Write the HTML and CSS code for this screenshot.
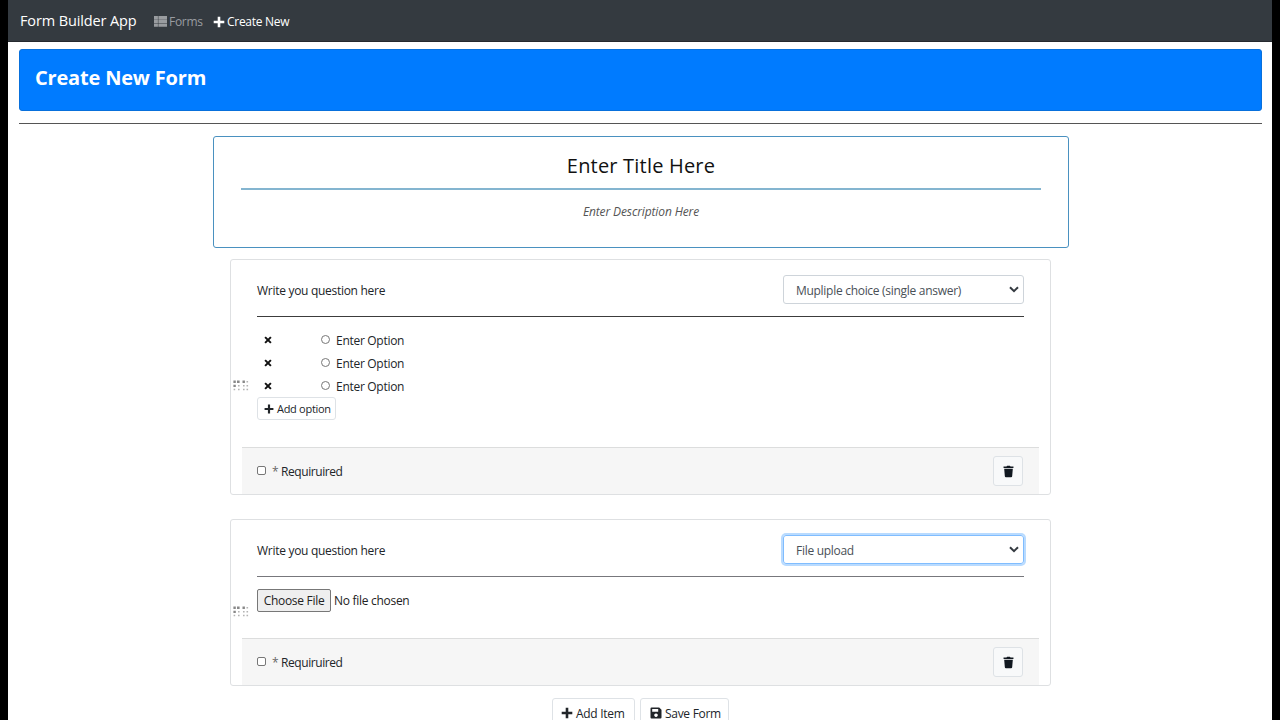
FILE: index.html
```html
<!DOCTYPE html>
<html lang="en">
<head>
<meta charset="utf-8">
<title>Form Builder App</title>
<link rel="stylesheet" href="styles.css">
</head>
<body>
<svg class="defs" width="0" height="0" aria-hidden="true">
  <symbol id="plus" viewBox="0 0 12 12"><path d="M4.7 .7h2.6v4h4v2.6h-4v4H4.7v-4h-4V4.7h4z"/></symbol>
  <symbol id="times" viewBox="0 0 8 8"><path d="M1.1 1.1l5.8 5.8M6.9 1.1L1.1 6.9" fill="none" stroke="currentColor" stroke-width="2"/></symbol>
  <symbol id="list" viewBox="0 0 13 11"><path d="M0 .1h3.9v3.3H0zM4.4.1H13v3.3H4.4zM0 3.8h3.9v3.3H0zM4.4 3.8H13v3.3H4.4zM0 7.5h3.9v3.3H0zM4.4 7.5H13v3.3H4.4z"/></symbol>
  <symbol id="trash" viewBox="0 0 12 14"><path d="M.6 1.6h3.2L4.5.6h3l.7 1h3.2v1.5H.6zM1.3 3.9h9.4L10 12.2c-.1.8-.5 1.2-1.2 1.2H3.2c-.7 0-1.1-.4-1.2-1.2z"/></symbol>
  <symbol id="save" viewBox="0 0 12 12"><path fill-rule="evenodd" d="M1.5.5h7.7l2.3 2.3v7.7q0 1-1 1h-9q-1 0-1-1v-9q0-1 1-1zM2.2 2v2.8h6V2zM6 6.4a1.8 1.8 0 1 0 .01 0z"/></symbol>
  <symbol id="chevron" viewBox="0 0 10 7"><path d="M1 1.2l4 4 4-4" fill="none" stroke="currentColor" stroke-width="2"/></symbol>
  <symbol id="grip" viewBox="0 0 16 11"><path fill="#888" d="M.4.5h2.4v2.4H.4zM4 .5h2.6v2.4H4zM9.5.5h2.4v2.4H9.5zM.4 4.7h2.4v2.3H.4z"/><path fill="#b4b4b4" d="M13.5 1h1.6v1.6h-1.6zM5 5h1.6v1.6H5zM10 5h1.6v1.6H10zM13.5 5h1.6v1.6h-1.6zM.6 8.7h1.6v1.5H.6zM5 8.7h1.6v1.5H5zM10 8.7h1.6v1.5H10zM13.5 8.7h1.6v1.5h-1.6z"/></symbol>
</svg>
<div class="page">
  <nav class="navbar">
    <span class="brand">Form Builder App</span>
    <a class="nav-link forms"><svg class="i-list"><use href="#list"/></svg><span>Forms</span></a>
    <a class="nav-link active"><svg class="i-plus"><use href="#plus"/></svg><span>Create New</span></a>
  </nav>
  <main class="content">
    <header class="banner"><h1>Create New Form</h1></header>
    <div class="rule"></div>
    <section class="title-card">
      <h2><span>Enter Title Here</span></h2>
      <p><span>Enter Description Here</span></p>
    </section>

    <section class="question first">
      <svg class="grip"><use href="#grip"/></svg>
      <div class="question-body">
        <div class="question-head">
          <span class="question-text">Write you question here</span>
          <div class="select"><span class="choice">Mupliple choice (single answer)</span><svg class="i-chevron"><use href="#chevron"/></svg></div>
        </div>
        <div class="options">
          <div class="option"><svg class="i-times"><use href="#times"/></svg><i class="radio"></i><span>Enter Option</span></div>
          <div class="option"><svg class="i-times"><use href="#times"/></svg><i class="radio"></i><span>Enter Option</span></div>
          <div class="option"><svg class="i-times"><use href="#times"/></svg><i class="radio"></i><span>Enter Option</span></div>
        </div>
        <button class="add-option"><svg class="i-plus-sm"><use href="#plus"/></svg><span>Add option</span></button>
      </div>
      <footer class="question-foot">
        <i class="checkbox"></i><span class="star">*</span><span class="required">Requiruired</span>
        <button class="delete"><svg class="i-trash"><use href="#trash"/></svg></button>
      </footer>
    </section>

    <section class="question second">
      <svg class="grip"><use href="#grip"/></svg>
      <div class="question-body">
        <div class="question-head">
          <span class="question-text">Write you question here</span>
          <div class="select focused"><span class="upload">File upload</span><svg class="i-chevron"><use href="#chevron"/></svg></div>
        </div>
        <div class="file"><button class="file-button"><span>Choose File</span></button><span class="file-name">No file chosen</span></div>
      </div>
      <footer class="question-foot">
        <i class="checkbox"></i><span class="star">*</span><span class="required">Requiruired</span>
        <button class="delete"><svg class="i-trash"><use href="#trash"/></svg></button>
      </footer>
    </section>

    <div class="actions">
      <button class="add-item"><svg class="i-plus"><use href="#plus"/></svg><span>Add Item</span></button>
      <button class="save-form"><svg class="i-save"><use href="#save"/></svg><span>Save Form</span></button>
    </div>
  </main>
</div>
</body>
</html>
```
FILE: styles.css
```css
* { box-sizing: border-box; }
html, body { height: 720px; overflow: hidden; }
body { margin: 0; background: #000; color: #212529; font: 12px/18px "Open Sans", "Noto Sans", sans-serif; letter-spacing: -.29px; }
span { white-space: nowrap; }
svg { flex: none; fill: currentColor; display: block; }
button { font: inherit; letter-spacing: inherit; color: inherit; margin: 0; padding: 0; display: flex; align-items: center; background: #fff; border: 1px solid #dee2e6; border-radius: 3px; }
.defs { position: absolute; }
.page { margin: 0 8px; height: 720px; background: #fff; overflow: hidden; }

.navbar { height: 42px; padding: 1px 12px 0; display: flex; align-items: center; background: #343a40; border-bottom: 1px solid #25292e; color: #fff; }
.brand { width: 134px; font-size: 14.5px; letter-spacing: -.13px; }
.nav-link { display: flex; align-items: center; padding-top: 1px; }
.forms { width: 59px; gap: 2px; color: #999ca0; }
.active { gap: 2px; }
.i-list { width: 13px; height: 11px; }
.i-plus { width: 12px; height: 12px; }

.content { padding: 7px 10px 0 11px; }
.banner { height: 62px; padding: 14px 15px; background: #007bff; border: 1px solid #0870dc; border-radius: 3px; color: #fff; }
.banner h1 { margin: 0; font-size: 20px; line-height: 28px; font-weight: 700; letter-spacing: -.18px; }
.rule { height: 1px; margin-top: 12px; background: #555; }

.title-card { width: 856px; height: 112px; margin: 12px 0 0 194px; padding: 0 27px; border: 1px solid #4a91c0; border-radius: 3px; text-align: center; }
.title-card h2 { height: 53px; margin: 0; padding-top: 15px; border-bottom: 2px solid #84b5d0; font-size: 20px; line-height: 28px; font-weight: 400; letter-spacing: .2px; color: #111; }
.title-card p { margin: 13px 0 0; font-style: italic; font-size: 12px; letter-spacing: -.12px; color: #555; }

.question { position: relative; width: 821px; margin-left: 211px; padding: 0 11px; border: 1px solid #dee0e2; border-radius: 3px; display: flex; flex-direction: column; }
.first { height: 236px; margin-top: 11px; }
.second { height: 167px; margin-top: 24px; }
.grip { position: absolute; left: 2px; top: 120px; width: 16px; height: 11px; }
.second .grip { top: 86px; }
.question-body { flex: 1; padding: 15px 15px 0; }
.question-head { height: 42px; display: flex; justify-content: space-between; border-bottom: 1px solid #3c3c3c; }
.second .question-head { border-color: #77777c; }
.question-text { padding-top: 7px; }
.select { width: 241px; height: 29px; padding: 0 4px 0 12px; display: flex; align-items: center; justify-content: space-between; border: 1px solid #ced4da; border-radius: 3px; color: #495057; }
.focused { border-color: #80bdff; box-shadow: 0 0 0 2px #b9dbff; }
.choice, .upload { padding-top: 2px; }
.i-chevron { width: 10px; height: 7px; color: #343a40; }
.options { padding: 12px 0 0 7px; }
.option { height: 23px; display: flex; align-items: center; }
.i-times { width: 8px; height: 8px; margin-top: -1px; color: #111; }
.radio { width: 9px; height: 9px; margin: -2px 6px 0 49px; border: 1px solid #777; border-radius: 50%; }
.add-option { width: 79px; height: 23px; padding-left: 6px; gap: 3px; margin-top: -1px; font-size: 11px; }
.i-plus-sm { width: 10px; height: 10px; }

.question-foot { height: 47px; padding: 0 15px; display: flex; align-items: center; background: #f6f6f6; border-top: 1px solid #dcdddd; }
.checkbox { width: 9px; height: 9px; margin-top: -2px; border: 1px solid #777; border-radius: 2px; background: #fff; }
.star { width: 9px; margin-left: 6px; color: #666; }
.required, .star { padding-top: 2px; letter-spacing: -.42px; }
.delete { width: 30px; height: 30px; margin: 0 1px 0 auto; justify-content: center; background: #f8f9fa; }
.i-trash { width: 11px; height: 13px; color: #111820; }

.file { display: flex; align-items: center; gap: 3px; margin-top: 12px; color: #222; }
.file-button { width: 74px; height: 23px; justify-content: center; background: #efefef; border-color: #777; border-radius: 2px; }

.actions { display: flex; gap: 5px; margin: 12px 0 0 533px; }
.actions button { height: 30px; padding-left: 8px; gap: 3px; }
.actions span { padding-top: 1px; }
.add-item { width: 83px; }
.actions .save-form { width: 89px; padding-left: 9px; }
.i-save { width: 12px; height: 12px; }
```
